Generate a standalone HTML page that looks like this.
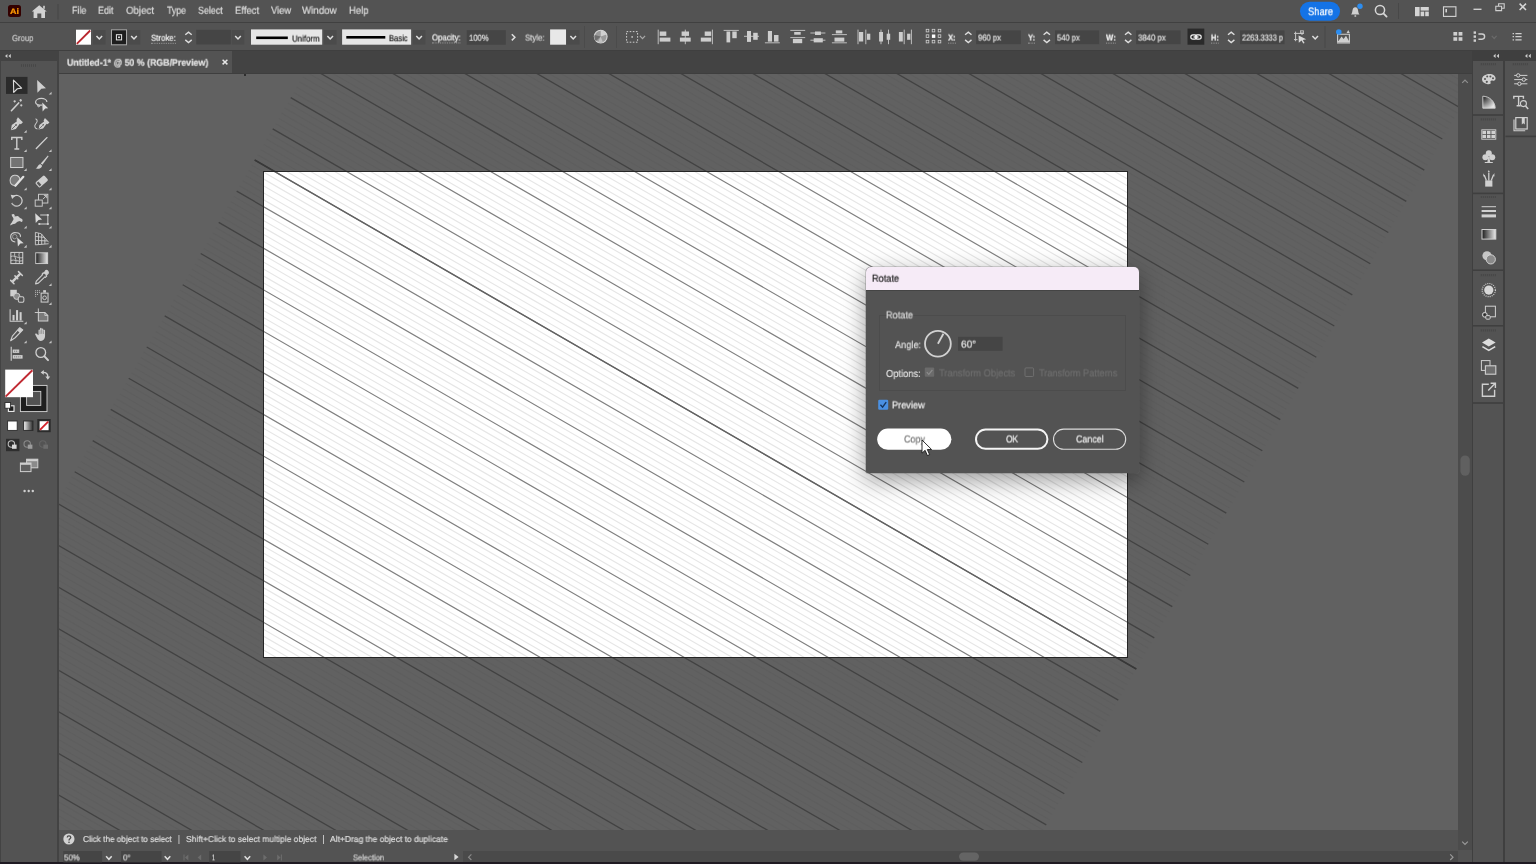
<!DOCTYPE html>
<html>
<head>
<meta charset="utf-8">
<title>Adobe Illustrator</title>
<style>
*{box-sizing:border-box;margin:0;padding:0}
html,body{width:1536px;height:864px;overflow:hidden;background:#535353}
body{position:relative;font-family:"Liberation Sans",sans-serif;font-size:11px;color:#dadada}
.abs{position:absolute}
.t{position:absolute;white-space:nowrap;line-height:1;will-change:transform;text-rendering:geometricPrecision;-webkit-text-stroke:0.22px currentColor}
svg{position:absolute;overflow:visible}
/* ---------- canvas ---------- */
#canvas{left:59px;top:74px;width:1399px;height:756px;background:#616161;overflow:hidden}
#artboard{left:205px;top:98px;width:864px;height:486px;background:#fff;overflow:hidden;position:absolute}
#abborder{position:absolute;left:204px;top:97px;width:865px;height:487px;border:1px solid #262626}
</style>
</head>
<body>

<!-- ================= CANVAS ================= -->
<div id="canvas" class="abs">
  <svg width="1399" height="756" viewBox="59 74 1399 756" style="left:0;top:0;overflow:hidden">
    <g transform="translate(695.5 414.5) rotate(30) translate(-509 -864)" fill="none">
      <path d="M0 6H1018M0 12H1018M0 18H1018M0 24H1018M0 30H1018M0 42H1018M0 48H1018M0 54H1018M0 60H1018M0 66H1018M0 78H1018M0 84H1018M0 90H1018M0 96H1018M0 102H1018M0 114H1018M0 120H1018M0 126H1018M0 132H1018M0 138H1018M0 150H1018M0 156H1018M0 162H1018M0 168H1018M0 174H1018M0 186H1018M0 192H1018M0 198H1018M0 204H1018M0 210H1018M0 222H1018M0 228H1018M0 234H1018M0 240H1018M0 246H1018M0 258H1018M0 264H1018M0 270H1018M0 276H1018M0 282H1018M0 294H1018M0 300H1018M0 306H1018M0 312H1018M0 318H1018M0 330H1018M0 336H1018M0 342H1018M0 348H1018M0 354H1018M0 366H1018M0 372H1018M0 378H1018M0 384H1018M0 390H1018M0 402H1018M0 408H1018M0 414H1018M0 420H1018M0 426H1018M0 438H1018M0 444H1018M0 450H1018M0 456H1018M0 462H1018M0 474H1018M0 480H1018M0 486H1018M0 492H1018M0 498H1018M0 510H1018M0 516H1018M0 522H1018M0 528H1018M0 534H1018M0 546H1018M0 552H1018M0 558H1018M0 564H1018M0 570H1018M0 582H1018M0 588H1018M0 594H1018M0 600H1018M0 606H1018M0 618H1018M0 624H1018M0 630H1018M0 636H1018M0 642H1018M0 654H1018M0 660H1018M0 666H1018M0 672H1018M0 678H1018M0 690H1018M0 696H1018M0 702H1018M0 708H1018M0 714H1018M0 726H1018M0 732H1018M0 738H1018M0 744H1018M0 750H1018M0 762H1018M0 768H1018M0 774H1018M0 780H1018M0 786H1018M0 798H1018M0 804H1018M0 810H1018M0 816H1018M0 822H1018M0 834H1018M0 840H1018M0 846H1018M0 852H1018M0 858H1018M0 870H1018M0 876H1018M0 882H1018M0 888H1018M0 894H1018M0 906H1018M0 912H1018M0 918H1018M0 924H1018M0 930H1018M0 942H1018M0 948H1018M0 954H1018M0 960H1018M0 966H1018M0 978H1018M0 984H1018M0 990H1018M0 996H1018M0 1002H1018M0 1014H1018M0 1020H1018M0 1026H1018M0 1032H1018M0 1038H1018M0 1050H1018M0 1056H1018M0 1062H1018M0 1068H1018M0 1074H1018M0 1086H1018M0 1092H1018M0 1098H1018M0 1104H1018M0 1110H1018M0 1122H1018M0 1128H1018M0 1134H1018M0 1140H1018M0 1146H1018M0 1158H1018M0 1164H1018M0 1170H1018M0 1176H1018M0 1182H1018M0 1194H1018M0 1200H1018M0 1206H1018M0 1212H1018M0 1218H1018M0 1230H1018M0 1236H1018M0 1242H1018M0 1248H1018M0 1254H1018M0 1266H1018M0 1272H1018M0 1278H1018M0 1284H1018M0 1290H1018M0 1302H1018M0 1308H1018M0 1314H1018M0 1320H1018M0 1326H1018M0 1338H1018M0 1344H1018M0 1350H1018M0 1356H1018M0 1362H1018M0 1374H1018M0 1380H1018M0 1386H1018M0 1392H1018M0 1398H1018M0 1410H1018M0 1416H1018M0 1422H1018M0 1428H1018M0 1434H1018M0 1446H1018M0 1452H1018M0 1458H1018M0 1464H1018M0 1470H1018M0 1482H1018M0 1488H1018M0 1494H1018M0 1500H1018M0 1506H1018M0 1518H1018M0 1524H1018M0 1530H1018M0 1536H1018M0 1542H1018M0 1554H1018M0 1560H1018M0 1566H1018M0 1572H1018M0 1578H1018M0 1590H1018M0 1596H1018M0 1602H1018M0 1608H1018M0 1614H1018M0 1626H1018M0 1632H1018M0 1638H1018M0 1644H1018M0 1650H1018M0 1662H1018M0 1668H1018M0 1674H1018M0 1680H1018M0 1686H1018M0 1698H1018M0 1704H1018M0 1710H1018M0 1716H1018M0 1722H1018" stroke="#5e5e5e" stroke-width="1"/>
      <path d="M0 0H1018M0 36H1018M0 72H1018M0 108H1018M0 144H1018M0 180H1018M0 216H1018M0 252H1018M0 288H1018M0 324H1018M0 360H1018M0 396H1018M0 432H1018M0 468H1018M0 504H1018M0 540H1018M0 576H1018M0 612H1018M0 648H1018M0 684H1018M0 720H1018M0 756H1018M0 792H1018M0 828H1018M0 864H1018M0 900H1018M0 936H1018M0 972H1018M0 1008H1018M0 1044H1018M0 1080H1018M0 1116H1018M0 1152H1018M0 1188H1018M0 1224H1018M0 1260H1018M0 1296H1018M0 1332H1018M0 1368H1018M0 1404H1018M0 1440H1018M0 1476H1018M0 1512H1018M0 1548H1018M0 1584H1018M0 1620H1018M0 1656H1018M0 1692H1018M0 1728H1018" stroke="#424242" stroke-width="1.3"/>
      <path d="M0 864H1018" stroke="#383838" stroke-width="1.5"/>
    </g>
  </svg>
  <div id="artboard">
  <svg width="864" height="486" viewBox="264 172 864 486" style="left:0;top:0;overflow:hidden">
    <g transform="translate(695.5 414.5) rotate(30) translate(-509 -864)" fill="none">
      <path d="M0 6H1018M0 12H1018M0 18H1018M0 24H1018M0 30H1018M0 42H1018M0 48H1018M0 54H1018M0 60H1018M0 66H1018M0 78H1018M0 84H1018M0 90H1018M0 96H1018M0 102H1018M0 114H1018M0 120H1018M0 126H1018M0 132H1018M0 138H1018M0 150H1018M0 156H1018M0 162H1018M0 168H1018M0 174H1018M0 186H1018M0 192H1018M0 198H1018M0 204H1018M0 210H1018M0 222H1018M0 228H1018M0 234H1018M0 240H1018M0 246H1018M0 258H1018M0 264H1018M0 270H1018M0 276H1018M0 282H1018M0 294H1018M0 300H1018M0 306H1018M0 312H1018M0 318H1018M0 330H1018M0 336H1018M0 342H1018M0 348H1018M0 354H1018M0 366H1018M0 372H1018M0 378H1018M0 384H1018M0 390H1018M0 402H1018M0 408H1018M0 414H1018M0 420H1018M0 426H1018M0 438H1018M0 444H1018M0 450H1018M0 456H1018M0 462H1018M0 474H1018M0 480H1018M0 486H1018M0 492H1018M0 498H1018M0 510H1018M0 516H1018M0 522H1018M0 528H1018M0 534H1018M0 546H1018M0 552H1018M0 558H1018M0 564H1018M0 570H1018M0 582H1018M0 588H1018M0 594H1018M0 600H1018M0 606H1018M0 618H1018M0 624H1018M0 630H1018M0 636H1018M0 642H1018M0 654H1018M0 660H1018M0 666H1018M0 672H1018M0 678H1018M0 690H1018M0 696H1018M0 702H1018M0 708H1018M0 714H1018M0 726H1018M0 732H1018M0 738H1018M0 744H1018M0 750H1018M0 762H1018M0 768H1018M0 774H1018M0 780H1018M0 786H1018M0 798H1018M0 804H1018M0 810H1018M0 816H1018M0 822H1018M0 834H1018M0 840H1018M0 846H1018M0 852H1018M0 858H1018M0 870H1018M0 876H1018M0 882H1018M0 888H1018M0 894H1018M0 906H1018M0 912H1018M0 918H1018M0 924H1018M0 930H1018M0 942H1018M0 948H1018M0 954H1018M0 960H1018M0 966H1018M0 978H1018M0 984H1018M0 990H1018M0 996H1018M0 1002H1018M0 1014H1018M0 1020H1018M0 1026H1018M0 1032H1018M0 1038H1018M0 1050H1018M0 1056H1018M0 1062H1018M0 1068H1018M0 1074H1018M0 1086H1018M0 1092H1018M0 1098H1018M0 1104H1018M0 1110H1018M0 1122H1018M0 1128H1018M0 1134H1018M0 1140H1018M0 1146H1018M0 1158H1018M0 1164H1018M0 1170H1018M0 1176H1018M0 1182H1018M0 1194H1018M0 1200H1018M0 1206H1018M0 1212H1018M0 1218H1018M0 1230H1018M0 1236H1018M0 1242H1018M0 1248H1018M0 1254H1018M0 1266H1018M0 1272H1018M0 1278H1018M0 1284H1018M0 1290H1018M0 1302H1018M0 1308H1018M0 1314H1018M0 1320H1018M0 1326H1018M0 1338H1018M0 1344H1018M0 1350H1018M0 1356H1018M0 1362H1018M0 1374H1018M0 1380H1018M0 1386H1018M0 1392H1018M0 1398H1018M0 1410H1018M0 1416H1018M0 1422H1018M0 1428H1018M0 1434H1018M0 1446H1018M0 1452H1018M0 1458H1018M0 1464H1018M0 1470H1018M0 1482H1018M0 1488H1018M0 1494H1018M0 1500H1018M0 1506H1018M0 1518H1018M0 1524H1018M0 1530H1018M0 1536H1018M0 1542H1018M0 1554H1018M0 1560H1018M0 1566H1018M0 1572H1018M0 1578H1018M0 1590H1018M0 1596H1018M0 1602H1018M0 1608H1018M0 1614H1018M0 1626H1018M0 1632H1018M0 1638H1018M0 1644H1018M0 1650H1018M0 1662H1018M0 1668H1018M0 1674H1018M0 1680H1018M0 1686H1018M0 1698H1018M0 1704H1018M0 1710H1018M0 1716H1018M0 1722H1018" stroke="#e6e6e6" stroke-width="1.15"/>
      <path d="M0 0H1018M0 36H1018M0 72H1018M0 108H1018M0 144H1018M0 180H1018M0 216H1018M0 252H1018M0 288H1018M0 324H1018M0 360H1018M0 396H1018M0 432H1018M0 468H1018M0 504H1018M0 540H1018M0 576H1018M0 612H1018M0 648H1018M0 684H1018M0 720H1018M0 756H1018M0 792H1018M0 828H1018M0 864H1018M0 900H1018M0 936H1018M0 972H1018M0 1008H1018M0 1044H1018M0 1080H1018M0 1116H1018M0 1152H1018M0 1188H1018M0 1224H1018M0 1260H1018M0 1296H1018M0 1332H1018M0 1368H1018M0 1404H1018M0 1440H1018M0 1476H1018M0 1512H1018M0 1548H1018M0 1584H1018M0 1620H1018M0 1656H1018M0 1692H1018M0 1728H1018" stroke="#808080" stroke-width="1.2"/>
      <path d="M0 864H1018" stroke="#626262" stroke-width="1.4"/>
    </g>
  </svg>
  </div>
  <div id="abborder"></div>
</div>

<!-- ================= MENU BAR ================= -->
<div class="abs" style="left:0;top:0;width:1536px;height:22px;background:#535353"></div>
<div class="abs" style="left:0;top:22px;width:1536px;height:1px;background:#404040"></div>
<div class="abs" style="left:8px;top:5px;width:13px;height:12px;border-radius:2.5px;background:#330000"></div>
<span class="t" style="left:10.20px;top:8px;font-size:8.0px;height:8.0px;font-weight:bold;color:#ff9a00;transform:translateY(0.00px) scaleX(1.1250);transform-origin:0 0;">Ai</span>
<svg width="1536" height="24" viewBox="0 0 1536 24" style="left:0;top:0">
  <path d="M39.2 5.2 L46.8 11.6 H45 V18 H41.3 V13.6 H37.3 V18 H33.6 V11.6 H31.8 Z" fill="#d2d2d2"/>
  <rect x="43.2" y="5.8" width="1.6" height="3" fill="#d2d2d2"/>
  <rect x="57.5" y="4" width="1" height="15.5" fill="#464646"/>
  <rect x="1398" y="3" width="1" height="16" fill="#484848"/>
  <rect x="1300" y="1.7" width="40" height="19" rx="9.5" fill="#1473e6"/>
  <!-- bell -->
  <path d="M1351 14.6 C1352.6 13.4 1352.2 9.6 1353.2 8.2 C1354 7 1356.6 7 1357.4 8.2 C1358.4 9.6 1358 13.4 1359.6 14.6 Z" fill="#d0d0d0"/>
  <rect x="1354.3" y="15.3" width="2" height="1.4" rx="0.7" fill="#d0d0d0"/>
  <circle cx="1360" cy="6.3" r="2.7" fill="#2c8df0"/>
  <!-- search -->
  <circle cx="1380" cy="10" r="4.6" fill="none" stroke="#d6d6d6" stroke-width="1.5"/>
  <path d="M1383.4 13.4 L1386.6 16.6" stroke="#d6d6d6" stroke-width="1.8" stroke-linecap="round"/>
  <!-- workspace -->
  <g fill="#d4d4d4"><rect x="1415" y="7" width="4.6" height="9.2"/><rect x="1420.6" y="7" width="8.2" height="3.6"/><rect x="1420.6" y="11.6" width="3.6" height="4.6"/><rect x="1425.2" y="11.6" width="3.6" height="4.6"/></g>
  <!-- panel -->
  <rect x="1443.5" y="6.8" width="12.4" height="9.6" fill="none" stroke="#d4d4d4" stroke-width="1.1"/><rect x="1445.4" y="9" width="1.6" height="3.4" fill="#d4d4d4"/>
  <!-- window controls -->
  <rect x="1473.5" y="8.6" width="8" height="1.4" fill="#cfcfcf"/>
  <path d="M1495.8 6.2 H1501.6 V10.6 H1495.8 Z M1498.6 6 V3.8 H1504.2 V8.2 H1501.8" fill="none" stroke="#cfcfcf" stroke-width="1.1"/>
  <path d="M1519.6 3.6 L1526 10 M1526 3.6 L1519.6 10" stroke="#d6d6d6" stroke-width="1.5"/>
</svg>
<span class="t" style="left:71.60px;top:6px;font-size:10.4px;height:10.4px;color:#dcdcdc;transform:translateY(0.80px) scaleX(0.8533);transform-origin:0 0;">File</span>
<span class="t" style="left:97.90px;top:6px;font-size:10.4px;height:10.4px;color:#dcdcdc;transform:translateY(0.80px) scaleX(0.8593);transform-origin:0 0;">Edit</span>
<span class="t" style="left:125.70px;top:6px;font-size:10.4px;height:10.4px;color:#dcdcdc;transform:translateY(0.80px) scaleX(0.9315);transform-origin:0 0;">Object</span>
<span class="t" style="left:166.50px;top:6px;font-size:10.4px;height:10.4px;color:#dcdcdc;transform:translateY(0.80px) scaleX(0.8427);transform-origin:0 0;">Type</span>
<span class="t" style="left:197.60px;top:6px;font-size:10.4px;height:10.4px;color:#dcdcdc;transform:translateY(0.80px) scaleX(0.8545);transform-origin:0 0;">Select</span>
<span class="t" style="left:234.70px;top:6px;font-size:10.4px;height:10.4px;color:#dcdcdc;transform:translateY(0.80px) scaleX(0.9128);transform-origin:0 0;">Effect</span>
<span class="t" style="left:270.50px;top:6px;font-size:10.4px;height:10.4px;color:#dcdcdc;transform:translateY(0.80px) scaleX(0.9036);transform-origin:0 0;">View</span>
<span class="t" style="left:301.70px;top:6px;font-size:10.4px;height:10.4px;color:#dcdcdc;transform:translateY(0.80px) scaleX(0.9354);transform-origin:0 0;">Window</span>
<span class="t" style="left:348.60px;top:6px;font-size:10.4px;height:10.4px;color:#dcdcdc;transform:translateY(0.80px) scaleX(0.9163);transform-origin:0 0;">Help</span>
<span class="t" style="left:1307.50px;top:7px;font-size:11.0px;height:11.0px;color:#ffffff;transform:translateY(0.20px) scaleX(0.8517);transform-origin:0 0;">Share</span>

<!-- ================= CONTROL BAR ================= -->
<div class="abs" style="left:0;top:23px;width:1536px;height:27px;background:#535353"></div>
<div class="abs" style="left:0;top:50px;width:1536px;height:1px;background:#3f3f3f"></div>
<svg width="1536" height="52" viewBox="0 0 1536 52" style="left:0;top:0">
<rect x="93.0" y="30" width="12.6" height="14.6" fill="#4b4b4b"/><rect x="127.7" y="30" width="12.6" height="14.6" fill="#4b4b4b"/><rect x="231.7" y="30" width="12.6" height="14.6" fill="#4b4b4b"/><rect x="323.9" y="30" width="12.6" height="14.6" fill="#4b4b4b"/><rect x="412.8" y="30" width="12.6" height="14.6" fill="#4b4b4b"/><rect x="566.9" y="30" width="12.6" height="14.6" fill="#4b4b4b"/><rect x="584" y="26" width="1" height="22" fill="#4b4b4b"/><rect x="616" y="26" width="1" height="22" fill="#4b4b4b"/><rect x="76" y="29.7" width="15" height="15" fill="#ffffff"/><path d="M76.8 43.9L90.2 30.5" stroke="#b8262d" stroke-width="1.8"/>
<rect x="111.5" y="29.8" width="15" height="15" fill="#1e1e1e" stroke="#a8a8a8" stroke-width="1"/><rect x="116.4" y="34.7" width="5.2" height="5.2" fill="none" stroke="#e8e8e8" stroke-width="1"/><rect x="118.2" y="36.5" width="1.6" height="1.6" fill="#fff"/>
<path d="M96.5 35.9L99.3 38.9L102.1 35.9" fill="none" stroke="#dedede" stroke-width="1.5"/>
<path d="M131.2 35.9L134.0 38.9L136.8 35.9" fill="none" stroke="#dedede" stroke-width="1.5"/>
<path d="M235.2 35.9L238.0 38.9L240.8 35.9" fill="none" stroke="#dedede" stroke-width="1.5"/>
<path d="M327.4 35.9L330.2 38.9L333.0 35.9" fill="none" stroke="#dedede" stroke-width="1.5"/>
<path d="M416.3 35.9L419.1 38.9L421.9 35.9" fill="none" stroke="#dedede" stroke-width="1.5"/>
<path d="M570.4 35.9L573.2 38.9L576.0 35.9" fill="none" stroke="#dedede" stroke-width="1.5"/>
<path d="M1312.4 35.9L1315.2 38.9L1318.0 35.9" fill="none" stroke="#dedede" stroke-width="1.5"/>
<path d="M639.9 35.8L642.5 38.6L645.1 35.8" fill="none" stroke="#a8a8a8" stroke-width="1.2"/>
<path d="M1491.8 35.9L1494.2 38.5L1496.6 35.9" fill="none" stroke="#6a6a6a" stroke-width="1.2"/>
<path d="M185.3 34.8L188.5 32.2L191.7 34.8" fill="none" stroke="#dedede" stroke-width="1.4"/><path d="M185.3 39.9L188.5 42.5L191.7 39.9" fill="none" stroke="#dedede" stroke-width="1.4"/>
<path d="M965.1 34.8L968.3 32.2L971.5 34.8" fill="none" stroke="#dedede" stroke-width="1.4"/><path d="M965.1 39.9L968.3 42.5L971.5 39.9" fill="none" stroke="#dedede" stroke-width="1.4"/>
<path d="M1043.6 34.8L1046.8 32.2L1050.0 34.8" fill="none" stroke="#dedede" stroke-width="1.4"/><path d="M1043.6 39.9L1046.8 42.5L1050.0 39.9" fill="none" stroke="#dedede" stroke-width="1.4"/>
<path d="M1125.0 34.8L1128.2 32.2L1131.4 34.8" fill="none" stroke="#dedede" stroke-width="1.4"/><path d="M1125.0 39.9L1128.2 42.5L1131.4 39.9" fill="none" stroke="#dedede" stroke-width="1.4"/>
<path d="M1228.0 34.8L1231.2 32.2L1234.4 34.8" fill="none" stroke="#dedede" stroke-width="1.4"/><path d="M1228.0 39.9L1231.2 42.5L1234.4 39.9" fill="none" stroke="#dedede" stroke-width="1.4"/>
<rect x="196.3" y="29.8" width="34.5" height="14.6" fill="#454545"/>
<rect x="466.7" y="30.2" width="39.1" height="14.5" fill="#454545"/>
<rect x="976.1" y="30.4" width="44.7" height="13.8" fill="#454545"/>
<rect x="1055" y="30.4" width="44.2" height="13.8" fill="#454545"/>
<rect x="1136.1" y="30.4" width="44.5" height="13.8" fill="#454545"/>
<rect x="1240" y="30.4" width="44.5" height="13.8" fill="#454545"/>
<rect x="251" y="29.4" width="71.2" height="15.3" fill="#e6e6e6"/>
<rect x="256.2" y="36.5" width="31.6" height="2.6" fill="#000"/>
<rect x="342.1" y="29.4" width="69.0" height="15.3" fill="#e6e6e6"/>
<rect x="346.3" y="36" width="39" height="2.6" fill="#000"/>
<path d="M511.8 34.2L514.9 37.3L511.8 40.4" fill="none" stroke="#dedede" stroke-width="1.5"/>
<rect x="550.1" y="29.4" width="15.9" height="15.3" fill="#e8e8e8"/>
<circle cx="600.7" cy="36.6" r="6.4" fill="#9a9a9a" stroke="#d8d8d8" stroke-width="1.1"/><path d="M600.7 36.6L600.7 30.4A6.2 6.2 0 0 1 606.5 34.4Z" fill="#d0d0d0"/><path d="M600.7 36.6L596 41A6.2 6.2 0 0 1 594.6 35Z" fill="#6e6e6e"/><path d="M600.7 36.6L603 42.4A6.2 6.2 0 0 1 598 42.2Z" fill="#c0c0c0"/>
<rect x="626.6" y="31.6" width="11" height="10.6" fill="none" stroke="#cfcfcf" stroke-width="1" stroke-dasharray="1.6 1.5"/><rect x="631.4" y="36.2" width="1.5" height="1.5" fill="#cfcfcf"/>
<rect x="657.7" y="29.6" width="1.0" height="14.6" fill="#bdbdbd"/>
<rect x="659.7" y="31.5" width="6.6" height="4.4" fill="#cdcdcd"/>
<rect x="659.7" y="37.6" width="10.7" height="4.0" fill="#cdcdcd"/>
<rect x="684.8" y="29.6" width="1.0" height="14.6" fill="#bdbdbd"/>
<rect x="681.6" y="31.5" width="7.4" height="4.4" fill="#cdcdcd"/>
<rect x="679.9" y="37.6" width="10.8" height="4.0" fill="#cdcdcd"/>
<rect x="711.9" y="29.6" width="1.0" height="14.6" fill="#bdbdbd"/>
<rect x="704.7" y="31.5" width="6.5" height="4.4" fill="#cdcdcd"/>
<rect x="700.8" y="37.6" width="10.4" height="4.0" fill="#cdcdcd"/>
<rect x="723.6" y="29.9" width="15.2" height="1.0" fill="#bdbdbd"/>
<rect x="726.5" y="31.5" width="3.7" height="10.9" fill="#cdcdcd"/>
<rect x="732.3" y="31.5" width="4.4" height="6.7" fill="#cdcdcd"/>
<rect x="744.0" y="35.8" width="15.0" height="1.0" fill="#bdbdbd"/>
<rect x="747.0" y="31.0" width="4.0" height="10.9" fill="#cdcdcd"/>
<rect x="753.2" y="32.8" width="4.5" height="7.0" fill="#cdcdcd"/>
<rect x="764.9" y="42.3" width="14.9" height="1.0" fill="#bdbdbd"/>
<rect x="767.9" y="31.0" width="4.1" height="10.6" fill="#cdcdcd"/>
<rect x="774.0" y="35.0" width="4.5" height="6.6" fill="#cdcdcd"/>
<rect x="790.3" y="29.9" width="14.9" height="1.0" fill="#bdbdbd"/>
<rect x="794.2" y="32.0" width="6.5" height="2.7" fill="#cdcdcd"/>
<rect x="790.3" y="37.1" width="14.9" height="1.0" fill="#bdbdbd"/>
<rect x="792.9" y="38.9" width="9.3" height="4.3" fill="#cdcdcd"/>
<rect x="810.4" y="32.5" width="15.0" height="1.0" fill="#bdbdbd"/>
<rect x="815.0" y="31.5" width="5.9" height="3.5" fill="#cdcdcd"/>
<rect x="810.4" y="39.7" width="15.0" height="1.0" fill="#bdbdbd"/>
<rect x="813.7" y="38.2" width="9.1" height="4.2" fill="#cdcdcd"/>
<rect x="835.8" y="30.4" width="6.5" height="3.0" fill="#cdcdcd"/>
<rect x="831.9" y="34.1" width="15.0" height="1.0" fill="#bdbdbd"/>
<rect x="834.5" y="37.6" width="9.8" height="4.0" fill="#cdcdcd"/>
<rect x="831.9" y="42.3" width="15.0" height="1.0" fill="#bdbdbd"/>
<rect x="857.5" y="29.6" width="1.0" height="14.6" fill="#bdbdbd"/>
<rect x="859.0" y="32.0" width="4.2" height="9.5" fill="#cdcdcd"/>
<rect x="865.3" y="29.6" width="1.0" height="14.6" fill="#bdbdbd"/>
<rect x="867.0" y="33.7" width="3.3" height="6.1" fill="#cdcdcd"/>
<rect x="880.5" y="29.6" width="1.0" height="14.6" fill="#bdbdbd"/>
<rect x="879.1" y="32.0" width="3.9" height="9.5" fill="#cdcdcd"/>
<rect x="888.0" y="29.6" width="1.0" height="14.6" fill="#bdbdbd"/>
<rect x="886.7" y="33.7" width="3.5" height="6.1" fill="#cdcdcd"/>
<rect x="898.9" y="32.0" width="3.9" height="9.5" fill="#cdcdcd"/>
<rect x="903.7" y="29.6" width="1.0" height="14.6" fill="#bdbdbd"/>
<rect x="907.1" y="33.7" width="3.3" height="6.1" fill="#cdcdcd"/>
<rect x="910.9" y="29.6" width="1.0" height="14.6" fill="#bdbdbd"/>
<rect x="926.2" y="29.3" width="2.6" height="2.6" fill="none" stroke="#d0d0d0" stroke-width="0.8"/>
<rect x="926.2" y="34.8" width="2.6" height="2.6" fill="none" stroke="#d0d0d0" stroke-width="0.8"/>
<rect x="926.2" y="40.3" width="2.6" height="2.6" fill="none" stroke="#d0d0d0" stroke-width="0.8"/>
<rect x="932.2" y="29.3" width="2.6" height="2.6" fill="none" stroke="#d0d0d0" stroke-width="0.8"/>
<rect x="931.9" y="34.5" width="3.4" height="3.4" fill="#fff"/>
<rect x="932.2" y="40.3" width="2.6" height="2.6" fill="none" stroke="#d0d0d0" stroke-width="0.8"/>
<rect x="938.2" y="29.3" width="2.6" height="2.6" fill="none" stroke="#d0d0d0" stroke-width="0.8"/>
<rect x="938.2" y="34.8" width="2.6" height="2.6" fill="none" stroke="#d0d0d0" stroke-width="0.8"/>
<rect x="938.2" y="40.3" width="2.6" height="2.6" fill="none" stroke="#d0d0d0" stroke-width="0.8"/>
<rect x="1187.5" y="28.6" width="16.8" height="16.1" fill="#2a2a2a"/>
<rect x="1190.8" y="34.8" width="6" height="4.4" rx="2.2" fill="none" stroke="#f0f0f0" stroke-width="1.2"/><rect x="1195.2" y="34.8" width="6" height="4.4" rx="2.2" fill="none" stroke="#f0f0f0" stroke-width="1.2"/><rect x="1193.5" y="36.4" width="5" height="1.2" fill="#f0f0f0"/>
<path d="M1294 33.4H1303.6M1294 39.6H1297.5M1295.6 31.6V41.2M1302 31.6V35" fill="none" stroke="#c8c8c8" stroke-width="1"/><rect x="1300.6" y="30.8" width="2.8" height="2.8" fill="none" stroke="#c8c8c8" stroke-width="0.8"/><path d="M1298.6 35.4L1306.2 39.2L1302.8 40L1304.6 43L1303.2 43.6L1301.6 40.6L1298.8 42.8Z" fill="#d8d8d8"/>
<rect x="1324.5" y="26" width="1" height="22" fill="#484848"/>
<path d="M1337.6 34.2H1349.4V41.6H1337.6Z" fill="none" stroke="#cfcfcf" stroke-width="1.1"/><path d="M1338.4 41L1341.6 36.6L1343.6 39L1346 35.8L1349 41Z" fill="#cfcfcf"/><rect x="1337" y="42.3" width="13" height="1.2" fill="#cfcfcf"/><path d="M1346.6 33L1348.2 30L1349.8 33Z" fill="#cfcfcf"/><circle cx="1338.8" cy="32" r="2.8" fill="#2c8df0"/>
<rect x="1453.4" y="32.0" width="3.8" height="3.6" fill="#cfcfcf"/>
<rect x="1458.6" y="32.0" width="3.8" height="3.6" fill="#cfcfcf"/>
<rect x="1453.4" y="37.2" width="3.8" height="3.6" fill="#cfcfcf"/>
<rect x="1458.6" y="37.2" width="3.8" height="3.6" fill="#cfcfcf"/>
<rect x="1473.6" y="31.4" width="2.4" height="2.4" fill="#cfcfcf"/><rect x="1473.6" y="35.4" width="2.4" height="2.4" fill="#cfcfcf"/><rect x="1473.6" y="39.4" width="2.4" height="2.4" fill="#cfcfcf"/><path d="M1478.4 34H1482A2.6 2.6 0 0 1 1482 39.2H1478.4" fill="none" stroke="#cfcfcf" stroke-width="1.4"/>
<path d="M1512.6 33.6H1514M1515.4 33.6H1521.6M1512.6 36.7H1514M1515.4 36.7H1521.6M1512.6 39.8H1514M1515.4 39.8H1521.6" stroke="#cfcfcf" stroke-width="1.2"/>
</svg>
<span class="t" style="left:11.70px;top:34px;font-size:8.8px;height:8.8px;color:#c8c8c8;transform:translateY(0.10px) scaleX(0.8790);transform-origin:0 0;">Group</span>
<span class="t" style="left:151.00px;top:33px;font-size:8.8px;height:8.8px;color:#f0f0f0;transform:translateY(0.80px) scaleX(0.8896);transform-origin:0 0;border-bottom:1px dotted #9a9a9a;height:10.3px;">Stroke:</span>
<span class="t" style="left:291.70px;top:34px;font-size:8.8px;height:8.8px;color:#1c1c1c;transform:translateY(0.60px) scaleX(0.8959);transform-origin:0 0;">Uniform</span>
<span class="t" style="left:389.20px;top:34px;font-size:8.8px;height:8.8px;color:#1c1c1c;transform:translateY(0.20px) scaleX(0.8690);transform-origin:0 0;">Basic</span>
<span class="t" style="left:432.00px;top:33px;font-size:8.8px;height:8.8px;color:#f0f0f0;transform:translateY(0.40px) scaleX(0.8860);transform-origin:0 0;border-bottom:1px dotted #9a9a9a;height:10.3px;">Opacity:</span>
<span class="t" style="left:469.00px;top:33px;font-size:8.8px;height:8.8px;color:#e0e0e0;transform:translateY(0.80px) scaleX(0.8708);transform-origin:0 0;">100%</span>
<span class="t" style="left:525.40px;top:33px;font-size:8.8px;height:8.8px;color:#d6d6d6;transform:translateY(0.60px) scaleX(0.8860);transform-origin:0 0;">Style:</span>
<span class="t" style="left:948.10px;top:33px;font-size:8.8px;height:8.8px;font-weight:bold;color:#f0f0f0;transform:translateY(0.60px) scaleX(0.8863);transform-origin:0 0;border-bottom:1px dotted #9a9a9a;height:10.3px;">X:</span>
<span class="t" style="left:978.30px;top:33px;font-size:8.8px;height:8.8px;color:#e0e0e0;transform:translateY(0.60px) scaleX(0.8705);transform-origin:0 0;">960 px</span>
<span class="t" style="left:1027.60px;top:33px;font-size:8.8px;height:8.8px;font-weight:bold;color:#f0f0f0;transform:translateY(0.60px) scaleX(0.8714);transform-origin:0 0;border-bottom:1px dotted #9a9a9a;height:10.3px;">Y:</span>
<span class="t" style="left:1056.90px;top:33px;font-size:8.8px;height:8.8px;color:#e0e0e0;transform:translateY(0.60px) scaleX(0.8629);transform-origin:0 0;">540 px</span>
<span class="t" style="left:1106.10px;top:33px;font-size:8.8px;height:8.8px;font-weight:bold;color:#f0f0f0;transform:translateY(0.60px) scaleX(0.8756);transform-origin:0 0;border-bottom:1px dotted #9a9a9a;height:10.3px;">W:</span>
<span class="t" style="left:1138.30px;top:33px;font-size:8.8px;height:8.8px;color:#e0e0e0;transform:translateY(0.60px) scaleX(0.8845);transform-origin:0 0;">3840 px</span>
<span class="t" style="left:1211.00px;top:33px;font-size:8.8px;height:8.8px;font-weight:bold;color:#f0f0f0;transform:translateY(0.60px) scaleX(0.8507);transform-origin:0 0;border-bottom:1px dotted #9a9a9a;height:10.3px;">H:</span>
<span class="t" style="left:1241.90px;top:33px;font-size:8.8px;height:8.8px;color:#e0e0e0;transform:translateY(0.60px) scaleX(0.8378);transform-origin:0 0;">2263.3333 p</span>

<!-- ================= TAB BAR ================= -->
<div class="abs" style="left:0;top:51px;width:1536px;height:23px;background:#434343"></div>
<div class="abs" style="left:59.4px;top:51.4px;width:173px;height:21.4px;background:#535353"></div>
<div class="abs" style="left:59px;top:72.8px;width:1413px;height:1.6px;background:#3e3e3e"></div>
<span class="t" style="left:66.90px;top:58px;font-size:9.6px;height:9.6px;font-weight:bold;color:#e2e2e2;transform:translateY(0.70px) scaleX(0.9179);transform-origin:0 0;">Untitled-1* @ 50 % (RGB/Preview)</span>
<svg width="10" height="10" viewBox="0 0 10 10" style="left:219.6px;top:57.4px"><path d="M2.6 2.8L7.4 7.4M7.4 2.8L2.6 7.4" stroke="#e6e6e6" stroke-width="1.5"/></svg>

<!-- ================= TOOLBAR ================= -->
<div class="abs" style="left:0;top:51px;width:59.4px;height:813px;background:#434343"></div>
<div class="abs" style="left:1px;top:60.6px;width:56px;height:801.8px;background:#535353"></div>
<svg width="60" height="864" viewBox="0 0 60 864" style="left:0;top:0">
<defs><linearGradient id="tg" x1="0" x2="1" y1="0" y2="0"><stop offset="0" stop-color="#1e1e1e"/><stop offset="1" stop-color="#e8e8e8"/></linearGradient></defs>
<rect x="6" y="76.9" width="21.5" height="17" fill="#2b2b2b"/>
<g transform="translate(16.8 85.7) scale(0.93)"><path d="M-3.6 -6L5.2 2.6L0.6 3.3L-3.3 7.2Z" fill="none" stroke="#dcdcdc" stroke-width="1.2" stroke-linejoin="round"/></g>
<g transform="translate(41.7 85.7) scale(0.93)"><path d="M-4.9 -6.2L4.6 2.8L-0.4 3.4L-4.6 7.6Z" fill="#cfcfcf"/><path d="M10.6 6.4V9.4H7.6Z" fill="#c4c4c4"/></g>
<g transform="translate(16.8 104.8) scale(0.93)"><path d="M-5.8 6.4L2 -2" stroke="#cfcfcf" stroke-width="1.7" stroke-linecap="round"/><path d="M-2.3 -5V-2.4M-3.6 -3.7H-1M4.2 -6.2V-3.4M2.8 -4.8H5.6M4.8 -0.6V1.8M3.6 0.6H6" stroke="#cfcfcf" stroke-width="1.1"/></g>
<g transform="translate(41.7 104.8) scale(0.93)"><path d="M0.5 0.2C-3 1 -6.6 -0.4 -6.6 -2.8C-6.6 -5.4 -3.4 -6.8 -0.4 -6.8C3 -6.8 5.6 -5.2 5.6 -3" fill="none" stroke="#cfcfcf" stroke-width="1.3"/><path d="M-3.8 -0.4C-5 0.6 -4.6 2.4 -3 2.2C-1.6 2 -2 0.2 -3.4 0.8" fill="none" stroke="#cfcfcf" stroke-width="1"/><path d="M0.6 -2.6L7 3.6L3.8 3.9L1 7.2Z" fill="#dadada"/></g>
<g transform="translate(16.8 124.0) scale(0.93)"><path d="M1.2 -7.2L6.6 -1.8L4.4 0.4L3.2 -0.2L-1 5.4L-6.4 6.6L-5.4 1.2L0.2 -3L-0.4 -4.2Z" fill="#cfcfcf"/><path d="M-5.6 5.8L-1.2 1.4" stroke="#535353" stroke-width="0.9"/><circle cx="-0.8" cy="1" r="0.9" fill="#535353"/><path d="M10.6 6.4V9.4H7.6Z" fill="#c4c4c4"/></g>
<g transform="translate(41.7 124.0) scale(0.93)"><g transform="translate(2.4 0) scale(0.9)"><path d="M1.2 -7.2L6.6 -1.8L4.4 0.4L3.2 -0.2L-1 5.4L-6.4 6.6L-5.4 1.2L0.2 -3L-0.4 -4.2Z" fill="#cfcfcf"/><path d="M-5.6 5.8L-1.2 1.4" stroke="#535353" stroke-width="0.9"/><circle cx="-0.8" cy="1" r="0.9" fill="#535353"/></g><path d="M-6.6 -5.6C-3.6 -4.4 -5 -1.6 -6.6 0C-8.2 2 -7.4 5.2 -4.6 5.4" fill="none" stroke="#cfcfcf" stroke-width="1.1"/></g>
<g transform="translate(16.8 143.2) scale(0.93)"><path d="M-5.4 -3.4V-6.2H5.4V-3.4M0 -6.2V6.2M-2.6 6.2H2.6" fill="none" stroke="#cfcfcf" stroke-width="1.5"/><path d="M10.6 6.4V9.4H7.6Z" fill="#c4c4c4"/></g>
<g transform="translate(41.7 143.2) scale(0.93)"><path d="M-5.8 5.8L5.6 -6" stroke="#cfcfcf" stroke-width="1.5" stroke-linecap="round"/><path d="M10.6 6.4V9.4H7.6Z" fill="#c4c4c4"/></g>
<g transform="translate(16.8 162.3) scale(0.93)"><rect x="-6.6" y="-5.2" width="13.2" height="10.8" fill="#737373" stroke="#cfcfcf" stroke-width="1.1"/><path d="M10.6 6.4V9.4H7.6Z" fill="#c4c4c4"/></g>
<g transform="translate(41.7 162.3) scale(0.93)"><path d="M6.6 -7.4L7.4 -6.4L0.8 2.6L-1 1.2Z" fill="#cfcfcf"/><path d="M-1.6 1.8L0.4 3.6C0.2 6 -2.6 7.4 -6.6 6.8C-4.6 5.8 -4.4 3 -1.6 1.8Z" fill="#cfcfcf"/><path d="M10.6 6.4V9.4H7.6Z" fill="#c4c4c4"/></g>
<g transform="translate(16.8 181.5) scale(0.93)"><path d="M-2.6 -6.6C1.2 -7 3.6 -4.6 3.2 -1.6L-1.4 4.4C-4.6 4.6 -7.4 2.4 -7.2 -1.2C-7 -4.2 -5.4 -6.2 -2.6 -6.6Z" fill="#7a7a7a" stroke="#cfcfcf" stroke-width="1.1"/><path d="M-1.6 4.6L7 -5" stroke="#e0e0e0" stroke-width="2.4" stroke-linecap="round"/><path d="M10.6 6.4V9.4H7.6Z" fill="#c4c4c4"/></g>
<g transform="translate(41.7 181.5) scale(0.93)"><g transform="rotate(-42)"><rect x="-6.4" y="-3.6" width="12.8" height="7.2" rx="1.4" fill="#cfcfcf"/><rect x="-5.2" y="-2.4" width="2.6" height="4.8" fill="#5a5a5a"/></g><path d="M10.6 6.4V9.4H7.6Z" fill="#c4c4c4"/></g>
<g transform="translate(16.8 200.6) scale(0.93)"><path d="M-3.6 -4.4A5.8 5.8 0 1 1 -5.4 2.6" fill="none" stroke="#cfcfcf" stroke-width="1.3"/><path d="M-5.4 2.6A5.8 5.8 0 0 0 -0.4 6.2" fill="none" stroke="#9a9a9a" stroke-width="1.3" stroke-dasharray="1.4 1.2"/><path d="M-6.6 -6.4L-1.4 -5.6L-5 -1.8Z" fill="#cfcfcf"/><path d="M10.6 6.4V9.4H7.6Z" fill="#c4c4c4"/></g>
<g transform="translate(41.7 200.6) scale(0.93)"><rect x="-3.4" y="-6.8" width="10" height="9.4" fill="none" stroke="#cfcfcf" stroke-width="1"/><rect x="-7" y="-0.6" width="7.6" height="6.6" fill="#535353" stroke="#cfcfcf" stroke-width="1"/><path d="M1.4 -1.6L5 -5.2M5.4 -2.6V-5.6H2.4" fill="none" stroke="#cfcfcf" stroke-width="1"/><path d="M10.6 6.4V9.4H7.6Z" fill="#c4c4c4"/></g>
<g transform="translate(16.8 219.7) scale(0.93)"><path d="M-5.6 -5.6C-3 -7.4 -1.6 -5 -2.4 -3.4C-0.6 -3.6 1.2 -4.8 2.4 -3C3.6 -1.2 6 -2 6.2 0.6C6.4 3 4.2 2.8 3.6 1.4C2 2 0.6 1.8 -0.6 3.4C-2 5.2 -4.6 4.4 -6.8 6.2C-7.6 4.6 -5.4 3.6 -5 2.2C-4.6 0.6 -3.2 0.4 -3.6 -1.4C-4 -2.8 -5.4 -3.6 -5.6 -5.6Z" fill="#cfcfcf"/><path d="M10.6 6.4V9.4H7.6Z" fill="#c4c4c4"/></g>
<g transform="translate(41.7 219.7) scale(0.93)"><path d="M-1.6 -5H6.6V4.6H-2.6" fill="none" stroke="#cfcfcf" stroke-width="1.1"/><rect x="5.6" y="-6" width="2" height="2" fill="#cfcfcf"/><rect x="5.6" y="3.6" width="2" height="2" fill="#cfcfcf"/><rect x="-3.6" y="3.6" width="2" height="2" fill="#cfcfcf"/><path d="M-7 -7L0.4 -0.2L-3.4 0.2L-6.4 3.6Z" fill="#dadada"/><path d="M10.6 6.4V9.4H7.6Z" fill="#c4c4c4"/></g>
<g transform="translate(16.8 238.9) scale(0.93)"><path d="M-6.6 -2C-7 -5.4 -3.6 -7.2 -0.8 -6.6C2.4 -7 4.6 -4.4 3.8 -2M-6.6 -2C-6.4 1 -4.4 3.2 -1.6 3.4" fill="none" stroke="#cfcfcf" stroke-width="1.2"/><circle cx="-2.2" cy="-2.4" r="2.4" fill="none" stroke="#a8a8a8" stroke-width="0.9"/><path d="M0.4 -1.4L7.4 4.6L3.8 5L1.2 8.2Z" fill="#dadada"/><path d="M10.6 6.4V9.4H7.6Z" fill="#c4c4c4"/></g>
<g transform="translate(41.7 238.9) scale(0.93)"><path d="M-6.8 -7V6.4L7.4 5.2M-6.8 -7L-0.6 -5.6L7.4 3.6M-6.8 -2.6L3 -1.6M-6.8 1.6L6 2.2M-3.4 -6.2V6M0 -5.2V5.8M3.4 -1V5.6" fill="none" stroke="#cfcfcf" stroke-width="0.95"/><path d="M10.6 6.4V9.4H7.6Z" fill="#c4c4c4"/></g>
<g transform="translate(16.8 258.0) scale(0.93)"><rect x="-6.4" y="-6" width="12.8" height="12" fill="none" stroke="#cfcfcf" stroke-width="1.1"/><path d="M-6.4 -1.6C-2 -3.6 2 1.4 6.4 -0.6M-2 -6C-3.6 -2 0.6 2 -1.4 6M2.8 -6C1 -3 4.4 2.4 2.6 6M-6.4 2.6C-3 1.2 2 4.4 6.4 3" fill="none" stroke="#cfcfcf" stroke-width="0.9"/></g>
<g transform="translate(41.7 258.0) scale(0.93)"><rect x="-6.4" y="-5.6" width="12.8" height="11.6" fill="url(#tg)" stroke="#cfcfcf" stroke-width="1"/></g>
<g transform="translate(16.8 277.2) scale(0.93)"><path d="M-4.6 4.8L4 -4" stroke="#cfcfcf" stroke-width="2.6"/><path d="M-6.6 3.4L-3 7M1.8 -6L6 -1.8M-2 -1.4L1 1.6" stroke="#cfcfcf" stroke-width="1.6" stroke-linecap="round"/></g>
<g transform="translate(41.7 277.2) scale(0.93)"><path d="M4.4 -7.2C6 -7.6 7.6 -6 7 -4.2L4.8 -2L5.4 -1.2L4 0.2L3.4 -0.4L-3.6 6.4L-6.6 7.2L-5.8 4.2L1 -2.8L0.4 -3.4L1.8 -4.8L2.4 -4.2Z" fill="none" stroke="#cfcfcf" stroke-width="1.2" stroke-linejoin="round"/><path d="M4.4 -7.2C6 -7.6 7.6 -6 7 -4.2L4.8 -2L2.4 -4.2Z" fill="#cfcfcf"/><path d="M10.6 6.4V9.4H7.6Z" fill="#c4c4c4"/></g>
<g transform="translate(16.8 296.3) scale(0.93)"><rect x="-7" y="-7" width="7" height="7" fill="#cfcfcf"/><circle cx="0" cy="0" r="3.4" fill="#8a8a8a" stroke="#cfcfcf" stroke-width="1"/><rect x="1.6" y="0.4" width="6" height="6" rx="1.6" fill="#535353" stroke="#cfcfcf" stroke-width="1.1"/></g>
<g transform="translate(41.7 296.3) scale(0.93)"><rect x="-0.6" y="-3.4" width="7.4" height="9.6" fill="none" stroke="#cfcfcf" stroke-width="1.1"/><rect x="1.6" y="-6.6" width="3" height="2.6" fill="#cfcfcf"/><circle cx="3.1" cy="1.6" r="2" fill="none" stroke="#cfcfcf" stroke-width="1"/><path d="M-7 -6H-6M-5 -6H-4M-3 -6H-2M-7 -4H-6M-5 -4H-4M-3 -4H-2M-7 -2H-6M-5 -2H-4M-7 0H-6" stroke="#cfcfcf" stroke-width="1"/><path d="M10.6 6.4V9.4H7.6Z" fill="#c4c4c4"/></g>
<g transform="translate(16.8 315.5) scale(0.93)"><path d="M-7.2 -6.8V6.2H7" fill="none" stroke="#cfcfcf" stroke-width="1.1"/><rect x="-4.6" y="-0.6" width="2.2" height="6" fill="#cfcfcf"/><rect x="-0.8" y="-5.8" width="2.2" height="11.2" fill="#cfcfcf"/><rect x="3" y="-3.6" width="2.2" height="9" fill="#cfcfcf"/><path d="M10.6 6.4V9.4H7.6Z" fill="#c4c4c4"/></g>
<g transform="translate(41.7 315.5) scale(0.93)"><path d="M-3.6 -3.2H3.4L6.6 0V6H-3.6Z" fill="#7a7a7a" stroke="#cfcfcf" stroke-width="1.1"/><path d="M3.4 -3.2V0H6.6" fill="none" stroke="#cfcfcf" stroke-width="0.9"/><path d="M-7.4 -3.2H-3.6M-3.6 -7.6V-3.2" stroke="#cfcfcf" stroke-width="1"/></g>
<g transform="translate(16.8 334.6) scale(0.93)"><path d="M3.2 -7.4L6.4 -5L-1.8 3.4L-6.6 6.6L-4.8 1.6Z" fill="none" stroke="#cfcfcf" stroke-width="1.2" stroke-linejoin="round"/><path d="M3.2 -7.4L6.4 -5L3.4 -1.8L0.6 -4.4Z" fill="#cfcfcf"/><path d="M10.6 6.4V9.4H7.6Z" fill="#c4c4c4"/></g>
<g transform="translate(41.7 334.6) scale(0.93)"><path d="M-3.4 0.6V-4.6C-3.4 -5.8 -1.8 -5.8 -1.8 -4.6V-6.2C-1.8 -7.6 0 -7.6 0 -6.2V-5.6C0 -7 1.8 -7 1.8 -5.6V-4.4C1.8 -5.6 3.6 -5.6 3.6 -4.2V1.6C3.6 5 1.6 6.8 -0.8 6.8C-3 6.8 -4 5.4 -5 3.6L-7 0C-7.4 -1 -5.8 -1.6 -5.2 -0.6Z" fill="#cfcfcf"/><path d="M-1.8 -4.6V-0.6M0 -5.6V-0.8M1.8 -4.4V-0.6" stroke="#6a6a6a" stroke-width="0.6"/><path d="M10.6 6.4V9.4H7.6Z" fill="#c4c4c4"/></g>
<g transform="translate(16.8 353.8) scale(0.93)"><path d="M-6 -7.6V7.6" stroke="#cfcfcf" stroke-width="1.2"/><rect x="-4.4" y="-4.6" width="7" height="3.6" fill="#cfcfcf"/><rect x="-4.4" y="1.4" width="10.6" height="3.8" fill="#cfcfcf"/><path d="M-3 -2.8H1.6M-3 3.3H5" stroke="#5a5a5a" stroke-width="0.8" stroke-dasharray="1.2 0.8"/></g>
<g transform="translate(41.7 353.8) scale(0.93)"><circle cx="-1" cy="-1.4" r="5.2" fill="none" stroke="#cfcfcf" stroke-width="1.4"/><path d="M3 2.8L6.8 6.8" stroke="#cfcfcf" stroke-width="2.2" stroke-linecap="round"/></g>
<path d="M7.4 54L5 56L7.4 58ZM10.8 54L8.4 56L10.8 58Z" fill="#cdcdcd"/>
<path d="M21 65.5H36" stroke="#474747" stroke-width="2.4" stroke-dasharray="1 1"/>
<rect x="20.4" y="385.4" width="26.6" height="26.2" fill="#1f1f1f" stroke="#d6d6d6" stroke-width="0.9"/>
<rect x="26.6" y="391.4" width="14.2" height="14" fill="#535353" stroke="#cfcfcf" stroke-width="0.9"/>
<rect x="5.2" y="369.6" width="27.8" height="27.6" fill="#ffffff"/><path d="M5.6 396.6L32.4 370.2" stroke="#c02a32" stroke-width="1.9"/>
<path d="M42.6 372.4C46.4 372.2 48 374 47.8 377.4" fill="none" stroke="#cfcfcf" stroke-width="1.4"/><path d="M40.6 372.4L43.8 370V374.8ZM47.8 379.8L45.4 376.6H50.2Z" fill="#cfcfcf"/>
<rect x="8.4" y="405.8" width="5.6" height="5.6" fill="#1e1e1e" stroke="#f0f0f0" stroke-width="1.1"/><rect x="5" y="402.6" width="5.6" height="5.6" fill="#fff" stroke="#1e1e1e" stroke-width="0.8"/>
<rect x="37.3" y="419" width="13.4" height="13.2" fill="#2b2b2b"/>
<rect x="7.6" y="421" width="9.6" height="9.4" fill="#fff" stroke="#2a2a2a" stroke-width="0.9"/>
<rect x="23.6" y="421" width="9.4" height="9.4" fill="url(#tg2)" stroke="#2a2a2a" stroke-width="0.9"/><defs><linearGradient id="tg2"><stop offset="0" stop-color="#f4f4f4"/><stop offset="1" stop-color="#2a2a2a"/></linearGradient></defs>
<rect x="39.6" y="421.2" width="9" height="9" fill="#fff"/><path d="M40 429.8L48.2 421.6" stroke="#d3232b" stroke-width="1.9"/>
<rect x="6" y="438.8" width="13.4" height="12.4" fill="#2e2e2e"/>
<circle cx="11.4" cy="444" r="3.2" fill="none" stroke="#bdbdbd" stroke-width="1.1"/><rect x="12.0" y="444.6" width="4.6" height="4.2" fill="#d8d8d8"/>
<circle cx="27.2" cy="444" r="3.2" fill="none" stroke="#8a8a8a" stroke-width="1.1"/><rect x="27.799999999999997" y="444.6" width="4.6" height="4.2" fill="#9c9c9c"/>
<circle cx="42.8" cy="444" r="3.2" fill="none" stroke="#646464" stroke-width="1.1"/><rect x="43.4" y="444.6" width="4.6" height="4.2" fill="#6c6c6c"/>
<rect x="26.6" y="459.2" width="11.2" height="8.6" fill="#8a8a8a" stroke="#cfcfcf" stroke-width="1"/><rect x="26.6" y="459.2" width="11.2" height="2" fill="#cfcfcf"/><rect x="20.4" y="463" width="10.6" height="8.6" fill="#606060" stroke="#cfcfcf" stroke-width="1"/><rect x="20.4" y="463" width="10.6" height="1.8" fill="#cfcfcf"/>
<circle cx="24.6" cy="491" r="1.2" fill="#cfcfcf"/><circle cx="28.7" cy="491" r="1.2" fill="#cfcfcf"/><circle cx="32.8" cy="491" r="1.2" fill="#cfcfcf"/>
</svg>

<!-- ================= RIGHT PANELS / SCROLLBARS ================= -->
<div class="abs" style="left:1458px;top:74.4px;width:14px;height:776px;background:#4c4c4c"></div>
<div class="abs" style="left:1472px;top:51px;width:64px;height:813px;background:#3f3f3f"></div>
<div class="abs" style="left:1473px;top:60.6px;width:30.4px;height:801.8px;background:#535353"></div>
<div class="abs" style="left:1505.4px;top:60.6px;width:30.6px;height:801.8px;background:#535353"></div>
<svg width="1536" height="864" viewBox="0 0 1536 864" style="left:0;top:0">
<defs><linearGradient id="rg1" x1="0" x2="1"><stop offset="0" stop-color="#1a1a1a"/><stop offset="1" stop-color="#ececec"/></linearGradient><radialGradient id="rg2" cx="0" cy="0.1" r="1.1"><stop offset="0" stop-color="#222"/><stop offset="1" stop-color="#e6e6e6"/></radialGradient></defs>
<path d="M1495.6000000000001 53.8L1493.2 55.9L1495.6000000000001 58ZM1499.0 53.8L1496.6000000000001 55.9L1499.0 58Z" fill="#cdcdcd"/>
<path d="M1527.4 53.8L1525 55.9L1527.4 58ZM1530.8 53.8L1528.4 55.9L1530.8 58Z" fill="#cdcdcd"/>
<path d="M1480.8 64.2H1495.8" stroke="#464646" stroke-width="2.2" stroke-dasharray="1 1"/>
<path d="M1512.8 64.2H1527.8" stroke="#464646" stroke-width="2.2" stroke-dasharray="1 1"/>
<path d="M1480.8 119.3H1495.8" stroke="#464646" stroke-width="2.2" stroke-dasharray="1 1"/>
<path d="M1480.8 197H1495.8" stroke="#464646" stroke-width="2.2" stroke-dasharray="1 1"/>
<path d="M1480.8 275.2H1495.8" stroke="#464646" stroke-width="2.2" stroke-dasharray="1 1"/>
<path d="M1480.8 330.3H1495.8" stroke="#464646" stroke-width="2.2" stroke-dasharray="1 1"/>
<rect x="1473" y="114.2" width="30.4" height="1.6" fill="#3f3f3f"/>
<rect x="1473" y="192.6" width="30.4" height="1.6" fill="#3f3f3f"/>
<rect x="1473" y="269.4" width="30.4" height="1.6" fill="#3f3f3f"/>
<rect x="1473" y="325.0" width="30.4" height="1.6" fill="#3f3f3f"/>
<rect x="1473" y="402.2" width="30.4" height="1.6" fill="#3f3f3f"/>
<rect x="1505.4" y="135.6" width="30.6" height="1.6" fill="#3f3f3f"/>
<g transform="translate(1488.8 79.2)"><path d="M-6.8 0.4C-6.8 -3 -3.4 -5.2 0.6 -5.2C4.4 -5.2 6.8 -3.2 6.8 -0.8C6.8 1.2 5 1.6 3.4 1.4C1.8 1.2 1.2 2.4 1.8 3.4C2.4 4.6 1 5.2 -1 5C-4.6 4.6 -6.8 2.8 -6.8 0.4Z" fill="#d0d0d0"/><circle cx="-3.8" cy="-0.2" r="1" fill="#535353"/><circle cx="-1.6" cy="-2.6" r="1" fill="#535353"/><circle cx="1.6" cy="-2.8" r="1" fill="#535353"/><circle cx="4.2" cy="-1" r="1" fill="#535353"/><circle cx="-2" cy="2.6" r="1.1" fill="#535353"/></g>
<g transform="translate(1488.8 102.4)"><path d="M-6 5.8V-6.2C0.6 -6.2 6.4 -0.8 6.4 5.8Z" fill="url(#rg2)" stroke="#d0d0d0" stroke-width="0.9"/></g>
<g transform="translate(1488.8 134.4)"><rect x="-7" y="-4.6" width="14" height="9.4" fill="none" stroke="#d0d0d0" stroke-width="0.9"/><rect x="-6.4" y="-3.6" width="3.6" height="3.2" fill="#d0d0d0"/><rect x="-6.4" y="0.4" width="3.6" height="3.2" fill="#d0d0d0"/><rect x="-1.9" y="-3.6" width="3.6" height="3.2" fill="#d0d0d0"/><rect x="-1.9" y="0.4" width="3.6" height="3.2" fill="#d0d0d0"/><rect x="2.6" y="-3.6" width="3.6" height="3.2" fill="#d0d0d0"/><rect x="2.6" y="0.4" width="3.6" height="3.2" fill="#d0d0d0"/></g>
<g transform="translate(1488.8 156.6)"><circle cx="0" cy="-3.4" r="3" fill="#d0d0d0"/><circle cx="-3.4" cy="0.6" r="3" fill="#d0d0d0"/><circle cx="3.4" cy="0.6" r="3" fill="#d0d0d0"/><path d="M-0.6 0L-1.4 5.4H-4V6.4H4V5.4H1.4L0.6 0Z" fill="#d0d0d0"/></g>
<g transform="translate(1488.8 179.4)"><rect x="-3.6" y="1" width="7.2" height="6.2" fill="#d0d0d0"/><path d="M-4.6 -4.4L-2.4 1M0 -7V1M4.8 -4.6L2.4 1" stroke="#d0d0d0" stroke-width="1.3"/><path d="M-5.6 -6.2L-3.8 -3.2L-5.4 -2.8ZM-1 -7.4L0 -9.4L1 -7.4ZM5.6 -6.4L5.6 -3L4 -3.6Z" fill="#d0d0d0"/></g>
<g transform="translate(1488.8 211.6)"><rect x="-7.2" y="-5.4" width="14.4" height="1" fill="#d0d0d0"/><rect x="-7.2" y="-1.6" width="14.4" height="2" fill="#d0d0d0"/><rect x="-7.2" y="2.8" width="14.4" height="3" fill="#d0d0d0"/></g>
<g transform="translate(1488.8 234.3)"><rect x="-6.8" y="-4.8" width="13.8" height="9.6" fill="url(#rg1)" stroke="#d0d0d0" stroke-width="1"/></g>
<g transform="translate(1488.8 257.4)"><circle cx="-1.8" cy="-1.6" r="4.6" fill="#c6c6c6"/><circle cx="2" cy="2" r="4.6" fill="#8a8a8a" stroke="#d8d8d8" stroke-width="0.9"/></g>
<g transform="translate(1488.8 290.1)"><circle r="4.6" fill="#d8d8d8"/><circle r="6.6" fill="none" stroke="#d0d0d0" stroke-width="1.2" stroke-dasharray="1 1.1"/></g>
<g transform="translate(1488.8 312.2)"><rect x="-3.4" y="-6" width="10" height="10.6" fill="none" stroke="#d0d0d0" stroke-width="1"/><circle cx="-4" cy="2.6" r="2.4" fill="#535353" stroke="#d0d0d0" stroke-width="1"/><rect x="-3" y="3.4" width="4.4" height="3.6" rx="1" fill="#535353" stroke="#d0d0d0" stroke-width="1"/><circle cx="-4" cy="2.6" r="0.9" fill="#222"/></g>
<g transform="translate(1488.8 345.0)"><path d="M0 -6.4L6.8 -2.4L0 1.6L-6.8 -2.4Z" fill="#dcdcdc"/><path d="M-6.4 1.6L0 5.4L6.4 1.6" fill="none" stroke="#dcdcdc" stroke-width="1.6"/></g>
<g transform="translate(1488.8 367.4)"><rect x="-7.4" y="-6.8" width="8.6" height="9.8" fill="none" stroke="#d0d0d0" stroke-width="1"/><rect x="-3.4" y="-1.6" width="10.4" height="8.4" fill="#6e6e6e" stroke="#d0d0d0" stroke-width="1.1"/></g>
<g transform="translate(1488.8 389.8)"><path d="M0 -5.6H-6.4V6.4H5.8V0" fill="none" stroke="#d0d0d0" stroke-width="1.4"/><path d="M-0.6 0.6L6 -6M1.8 -6.6H6.6V-1.8" fill="none" stroke="#d0d0d0" stroke-width="1.4"/></g>
<g transform="translate(1520.8 79.6)"><path d="M-6.6 -4.2H6.6M-6.6 0H6.6M-6.6 4.2H6.6" stroke="#d0d0d0" stroke-width="1"/><circle cx="-2.6" cy="-4.2" r="1.7" fill="#535353" stroke="#d0d0d0" stroke-width="1"/><circle cx="3" cy="0" r="1.7" fill="#535353" stroke="#d0d0d0" stroke-width="1"/><circle cx="-1.4" cy="4.2" r="1.7" fill="#535353" stroke="#d0d0d0" stroke-width="1"/></g>
<g transform="translate(1520.8 102.4)"><path d="M-7 -3.6V-6H2.6V-3.6M-2.2 -6V3.4M-4.2 3.4H-0.2" fill="none" stroke="#d0d0d0" stroke-width="1.4"/><circle cx="2.6" cy="1.2" r="3" fill="none" stroke="#d0d0d0" stroke-width="1.1"/><path d="M4.8 3.6L7.4 6.6" stroke="#d0d0d0" stroke-width="1.5"/></g>
<g transform="translate(1520.8 124.2)"><rect x="-5" y="-6.6" width="11.4" height="11.4" fill="none" stroke="#d0d0d0" stroke-width="1.2"/><path d="M-6.8 -4.6V6.6H4.4" fill="none" stroke="#d0d0d0" stroke-width="1.1"/><path d="M1 -6.6H4V0.4L2.5 -1L1 0.4Z" fill="#d0d0d0"/></g>
</svg>

<div class="abs" style="left:244.4px;top:74px;width:1.8px;height:1.6px;border-radius:1px;background:#1e1e1e"></div>
<!-- ================= STATUS BAR ================= -->
<div class="abs" style="left:59.4px;top:830px;width:1398.6px;height:20.6px;background:#535353"></div>
<div class="abs" style="left:59.4px;top:850.6px;width:404px;height:12px;background:#535353"></div>
<div class="abs" style="left:463.4px;top:850.6px;width:994.6px;height:12px;background:#4a4a4a"></div>
<div class="abs" style="left:1458px;top:850.6px;width:14px;height:12px;background:#535353"></div>
<div class="abs" style="left:0;top:862.4px;width:1536px;height:1.6px;background:#1f1a22"></div>
<svg width="1536" height="864" viewBox="0 0 1536 864" style="left:0;top:0">
<circle cx="68.9" cy="839" r="5.6" fill="#d2d2d2"/>
<path d="M67.2 837.6C67.2 835.4 70.8 835.4 70.8 837.6C70.8 838.8 69 838.9 69 840.4" fill="none" stroke="#4a4a4a" stroke-width="1.3"/><circle cx="69" cy="842.3" r="0.8" fill="#4a4a4a"/>
<rect x="178.5" y="835" width="0.9" height="9" fill="#cfcfcf"/><rect x="323" y="835" width="0.9" height="9" fill="#cfcfcf"/>
<rect x="63.3" y="851" width="38.8" height="11.4" fill="#454545"/>
<rect x="121.1" y="851" width="40.4" height="11.4" fill="#454545"/>
<rect x="209.2" y="851" width="31.2" height="11.4" fill="#454545"/>
<path d="M106.1 856.3L108.9 859.3L111.7 856.3" fill="none" stroke="#dedede" stroke-width="1.5"/>
<path d="M164.7 856.3L167.5 859.3L170.3 856.3" fill="none" stroke="#dedede" stroke-width="1.5"/>
<path d="M244.6 856.3L247.4 859.3L250.2 856.3" fill="none" stroke="#dedede" stroke-width="1.5"/>
<path d="M184 854.6V860.4" stroke="#6c6c6c" stroke-width="1.1"/><path d="M188.4 854.6L185 857.5L188.4 860.4Z" fill="#6c6c6c"/>
<path d="M201.2 854.6L197.6 857.5L201.2 860.4Z" fill="#6c6c6c"/>
<path d="M263.4 854.6L267 857.5L263.4 860.4Z" fill="#6c6c6c"/>
<path d="M277.2 854.6L280.6 857.5L277.2 860.4Z" fill="#6c6c6c"/><path d="M281.4 854.6V860.4" stroke="#6c6c6c" stroke-width="1.1"/>
<path d="M454.4 853.8L458.6 857L454.4 860.2Z" fill="#d8d8d8"/>
<path d="M471.4 854.4L468.6 857.2L471.4 860" fill="none" stroke="#8a8a8a" stroke-width="1.2"/>
<path d="M1450.2 854.4L1453 857.2L1450.2 860" fill="none" stroke="#9a9a9a" stroke-width="1.2"/>
<rect x="959" y="852.4" width="20" height="8.4" rx="4.2" fill="#646464"/>
<path d="M1462.2 82.8L1465 80L1467.8 82.8" fill="none" stroke="#8f8f8f" stroke-width="1.2"/>
<path d="M1462.2 841.6L1465 844.4L1467.8 841.6" fill="none" stroke="#9a9a9a" stroke-width="1.2"/>
<rect x="1460.4" y="455.4" width="9.4" height="20.4" rx="4.7" fill="#606060"/>
</svg>
<span class="t" style="left:83.40px;top:835px;font-size:8.6px;height:8.6px;color:#dadada;transform:translateY(0.00px) scaleX(0.9565);transform-origin:0 0;">Click the object to select</span>
<span class="t" style="left:185.90px;top:835px;font-size:8.6px;height:8.6px;color:#dadada;transform:translateY(0.00px) scaleX(0.9831);transform-origin:0 0;">Shift+Click to select multiple object</span>
<span class="t" style="left:329.90px;top:835px;font-size:8.6px;height:8.6px;color:#dadada;transform:translateY(0.00px) scaleX(0.9853);transform-origin:0 0;">Alt+Drag the object to duplicate</span>
<span class="t" style="left:64.30px;top:853px;font-size:8.4px;height:8.4px;color:#dadada;transform:translateY(0.40px) scaleX(0.9398);transform-origin:0 0;">50%</span>
<span class="t" style="left:123.20px;top:853px;font-size:8.4px;height:8.4px;color:#dadada;transform:translateY(0.40px) scaleX(0.9214);transform-origin:0 0;">0°</span>
<span class="t" style="left:212.00px;top:853px;font-size:8.4px;height:8.4px;color:#dadada;transform:translateY(0.40px) scaleX(0.6421);transform-origin:0 0;">1</span>
<span class="t" style="left:353.20px;top:853px;font-size:8.4px;height:8.4px;color:#d0d0d0;transform:translateY(0.40px) scaleX(0.9029);transform-origin:0 0;">Selection</span>

<!-- ================= ROTATE DIALOG ================= -->
<div class="abs" style="left:866px;top:267px;width:272.6px;height:205.6px;border-radius:5px 5px 2px 2px;background:#535353;box-shadow:0 7px 22px 1px rgba(0,0,0,.38),0 0 0 0.6px rgba(120,120,120,.5);overflow:hidden">
  <div class="abs" style="left:0;top:0;width:100%;height:23.4px;background:#f6ebf7"></div>
  <div class="abs" style="left:0;top:23.4px;width:100%;height:1px;background:#444"></div>
  <div class="abs" style="left:13px;top:48px;width:247px;height:76px;border:1px solid #4c4c4c"></div>
</div>
<svg width="1536" height="864" viewBox="0 0 1536 864" style="left:0;top:0">
  <circle cx="937.9" cy="343.7" r="12.9" fill="none" stroke="#d2d2d2" stroke-width="1.8"/>
  <path d="M937.9 343.7L943.4 333.8" stroke="#d2d2d2" stroke-width="1.8"/>
  <rect x="958" y="336.8" width="44.6" height="14" fill="#454545"/>
  <rect x="924.8" y="367.6" width="9.4" height="9.2" rx="1" fill="#6b6b6b"/>
  <path d="M926.8 372.2L928.8 374.4L932.4 369.8" fill="none" stroke="#8c8c8c" stroke-width="1.2"/>
  <rect x="1025" y="367.9" width="8.6" height="8.6" rx="1" fill="none" stroke="#737373" stroke-width="0.9"/>
  <rect x="878.2" y="399.8" width="10" height="10" rx="1.2" fill="#4a90e2"/>
  <path d="M880.4 404.8L882.6 407.2L886.2 402.2" fill="none" stroke="#16355c" stroke-width="1.4"/>
  <rect x="877.2" y="428.6" width="74.2" height="21.2" rx="10.6" fill="#ffffff"/>
  <rect x="976" y="429.6" width="71.4" height="19.2" rx="9.6" fill="none" stroke="#f4f4f4" stroke-width="2"/>
  <rect x="1053.5" y="429.1" width="72.2" height="20.2" rx="10.1" fill="none" stroke="#dcdcdc" stroke-width="1.1"/>
</svg>
<span class="t" style="left:872.40px;top:274px;font-size:10.2px;height:10.2px;color:#232323;transform:translateY(0.70px) scaleX(0.9051);transform-origin:0 0;">Rotate</span>
<span class="t" style="left:885.70px;top:311px;font-size:10.2px;height:10.2px;color:#d8d8d8;transform:translateY(0.40px) scaleX(0.9051);transform-origin:0 0;">Rotate</span>
<span class="t" style="left:894.90px;top:341px;font-size:10.2px;height:10.2px;color:#dcdcdc;transform:translateY(0.20px) scaleX(0.9024);transform-origin:0 0;">Angle:</span>
<span class="t" style="left:960.90px;top:340px;font-size:10.2px;height:10.2px;color:#e4e4e4;transform:translateY(0.60px) scaleX(0.9789);transform-origin:0 0;">60°</span>
<span class="t" style="left:885.70px;top:370px;font-size:10.2px;height:10.2px;color:#dcdcdc;transform:translateY(0.00px) scaleX(0.9161);transform-origin:0 0;">Options:</span>
<span class="t" style="left:939.30px;top:369px;font-size:10.2px;height:10.2px;color:#6e6e6e;transform:translateY(0.40px) scaleX(0.9137);transform-origin:0 0;">Transform Objects</span>
<span class="t" style="left:1039.40px;top:369px;font-size:10.2px;height:10.2px;color:#6e6e6e;transform:translateY(0.40px) scaleX(0.9020);transform-origin:0 0;">Transform Patterns</span>
<span class="t" style="left:892.10px;top:401px;font-size:10.2px;height:10.2px;color:#ececec;transform:translateY(0.50px) scaleX(0.9013);transform-origin:0 0;">Preview</span>
<span class="t" style="left:904.10px;top:435px;font-size:10.2px;height:10.2px;color:#7a7a7a;transform:translateY(0.50px) scaleX(0.8819);transform-origin:0 0;">Copy</span>
<span class="t" style="left:1005.80px;top:435px;font-size:10.2px;height:10.2px;color:#f2f2f2;transform:translateY(0.50px) scaleX(0.8143);transform-origin:0 0;">OK</span>
<span class="t" style="left:1075.60px;top:435px;font-size:10.2px;height:10.2px;color:#ececec;transform:translateY(0.50px) scaleX(0.8724);transform-origin:0 0;">Cancel</span>
<svg width="14" height="20" viewBox="0 0 14 20" style="left:920.6px;top:438.8px"><path d="M1 1V14.2L4.1 11.3L6.4 16.6L8.6 15.6L6.3 10.5H10.6Z" fill="#fff" stroke="#1a1a1a" stroke-width="0.9" stroke-linejoin="round"/></svg>


</body>
</html>
